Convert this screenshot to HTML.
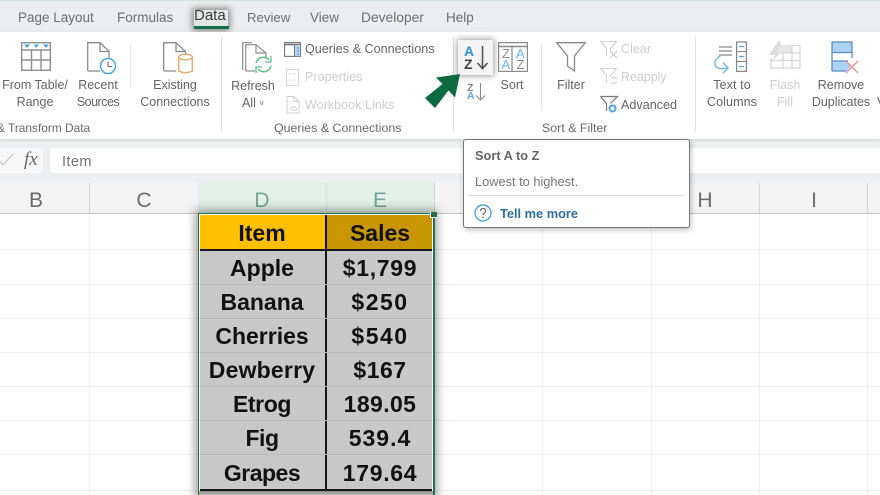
<!DOCTYPE html>
<html><head><meta charset="utf-8">
<style>
html,body{margin:0;padding:0;width:880px;height:495px;overflow:hidden;background:#fff}
body{position:relative;font-family:"Liberation Sans",sans-serif;color:#555}
.a{position:absolute}
.t{position:absolute;white-space:nowrap;font-size:12.5px;line-height:17px;color:#646464;text-align:center;transform:translateX(-50%)}
.l{position:absolute;white-space:nowrap;font-size:12.6px;line-height:17px;color:#646464}
.d{color:#cdcdcd}
.tab{position:absolute;top:9px;font-size:13.5px;line-height:18px;color:#6e6e6e;white-space:nowrap}
.g{position:absolute;white-space:nowrap;font-size:12.3px;line-height:14px;color:#6a6a6a;top:121px}
.h{position:absolute;top:189px;font-size:21px;line-height:23px;color:#6b6b6b;transform:translateX(-50%)}
.c{position:absolute;font-weight:bold;font-size:23px;line-height:28px;color:#111;text-align:center;white-space:nowrap;transform:translateX(-50%)}
svg{position:absolute;overflow:visible}
</style></head><body>
<!-- tab strip -->
<div class="a" style="left:0;top:0;width:880px;height:32px;background:#ebedee"></div>
<div class="a" style="left:0;top:0;width:880px;height:1px;background:#cfe3d8"></div>
<div class="tab" style="left:18px">Page Layout</div>
<div class="tab" style="left:117px">Formulas</div>
<div class="a" style="left:194px;top:10px;width:34px;height:19px;background:#e4e5e5;box-shadow:0 0 6px 2px rgba(0,0,0,.42)"></div>
<div class="tab" style="left:194px;top:7px;color:#3a3a3a;font-size:15px">Data</div>
<div class="a" style="left:194px;top:26px;width:35px;height:3px;background:#107048"></div>
<div class="tab" style="left:247px;font-size:13.2px">Review</div>
<div class="tab" style="left:310px">View</div>
<div class="tab" style="left:361px;font-size:13.8px">Developer</div>
<div class="tab" style="left:446px">Help</div>

<!-- ribbon -->
<div class="a" style="left:0;top:139px;width:880px;height:44px;background:#edeff0"></div>
<div class="a" style="left:0;top:32px;width:880px;height:107px;background:#fff;box-shadow:0 1px 3px rgba(0,0,0,.12)"></div>
<!-- separators -->
<div class="a" style="left:130px;top:44px;width:1px;height:44px;background:#e4e4e4"></div>
<div class="a" style="left:221px;top:37px;width:1px;height:95px;background:#e2e2e2"></div>
<div class="a" style="left:453px;top:37px;width:1px;height:95px;background:#e2e2e2"></div>
<div class="a" style="left:541px;top:44px;width:1px;height:66px;background:#e6e6e6"></div>
<div class="a" style="left:695px;top:37px;width:1px;height:95px;background:#e2e2e2"></div>

<!-- From Table icon -->
<svg style="left:21px;top:42px" width="30" height="29" viewBox="0 0 30 29" fill="none" stroke="#8f8f8f" stroke-width="1.4">
<rect x=".7" y=".7" width="28.600" height="27.600"/><path d="M0 8H30M0 18H30M10.500 8V29M20 8V29"/>
<path d="M3 2.500H9L6 6ZM12.500 2.500H18L15.300 6ZM22 2.500H28L25 6Z" fill="#4ba6e0" stroke="none"/></svg>
<!-- Recent sources -->
<svg style="left:86px;top:41px" width="32" height="34" viewBox="0 0 32 34" fill="none">
<path d="M1.700 30V1.700H14L23 10.500V17" stroke="#8a8a8a" stroke-width="1.300"/><path d="M14 2V10.500H23" stroke="#8a8a8a" stroke-width="1.300"/><path d="M2 30H14" stroke="#8a8a8a" stroke-width="1.300"/>
<circle cx="22" cy="25" r="7.500" fill="#fff" stroke="#4ba6e0" stroke-width="1.500"/><path d="M22 20.500V25.500H26" stroke="#666" stroke-width="1"/></svg>
<!-- Existing -->
<svg style="left:163px;top:41px" width="32" height="34" viewBox="0 0 32 34" fill="none">
<path d="M.7 30V1.700H13L22.500 10.500V13M.7 30H13" stroke="#8a8a8a" stroke-width="1.300"/><path d="M13 2V10.500H22.500" stroke="#8a8a8a" stroke-width="1.300"/>
<path d="M15.700 16V30Q22.500 33.500 29.300 30V16" fill="#fff" stroke="#eba76a" stroke-width="1.400"/><ellipse cx="22.500" cy="16" rx="6.800" ry="2.800" fill="#fff" stroke="#eba76a" stroke-width="1.400"/></svg>
<!-- Refresh -->
<svg style="left:242px;top:41px" width="32" height="34" viewBox="0 0 32 34" fill="none">
<path d="M.7 29V1.700H10" stroke="#8a8a8a" stroke-width="1.200"/>
<path d="M3.700 30V3.700H14L24 12V17M3.700 30H13" fill="#fff" stroke="#8a8a8a" stroke-width="1.200"/><path d="M14 4V12H24" stroke="#8a8a8a" stroke-width="1.200"/>
<path d="M14 22A7.500 7.500 0 0 1 27 19M29 25A7.500 7.500 0 0 1 16 28" stroke="#5dc08a" stroke-width="1.500"/><path d="M29 15V21H23M14 32V26H20" stroke="#5dc08a" stroke-width="1.300"/></svg>

<div class="t" style="left:35px;top:77px;line-height:17px">From Table/<br>Range</div>
<div class="t" style="left:98px;top:77px">Recent<br><span style="letter-spacing:-.5px">Sources</span></div>
<div class="t" style="left:175px;top:77px">Existing<br>Connections</div>
<div class="t" style="left:253px;top:78px">Refresh<br>All <span style="font-size:8px;vertical-align:1px">&#709;</span></div>
<div class="g" style="left:-3px;font-size:11.900px">&amp; Transform Data</div>
<div class="g" style="left:274px;font-size:12.400px">Queries &amp; Connections</div>
<div class="g" style="left:542px;font-size:12.400px">Sort &amp; Filter</div>

<!-- Q&C small icons -->
<svg style="left:284px;top:42px" width="17" height="15" viewBox="0 0 17 15" fill="none"><rect x=".6" y=".6" width="15.800" height="13.800" stroke="#777" stroke-width="1.100"/><path d="M1 2.500H16" stroke="#777" stroke-width="1.600"/><rect x="11" y="4" width="5" height="10" fill="#b4d8f2"/><path d="M10.500 3V14" stroke="#777"/><path d="M13 6H15M13 9H15M13 12H15" stroke="#3e96d6"/></svg>
<div class="l" style="left:305px;top:41px">Queries &amp; Connections</div>
<svg style="left:286px;top:69px" width="14" height="17" viewBox="0 0 14 17" fill="none" stroke="#d6d6d6"><rect x=".5" y=".5" width="12" height="16"/><path d="M3 5H5M7 5H10M3 11H5M7 11H10"/></svg>
<div class="l d" style="left:305px;top:69px">Properties</div>
<svg style="left:286px;top:96px" width="15" height="18" viewBox="0 0 15 18" fill="none" stroke="#d0d0d0"><path d="M1 17V.5H8L13 5.500V17ZM8 1V5.500H13"/><path d="M4 13Q8 9 10 12T6 14"/></svg>
<div class="l d" style="left:305px;top:97px">Workbook Links</div>

<!-- A-Z button -->
<div class="a" style="left:458px;top:40px;width:35px;height:35px;background:#f4f4f4;box-shadow:0 0 6px 1px rgba(0,0,0,.38)"></div>
<div class="a" style="left:464px;top:44px;font-weight:bold;font-size:14px;line-height:14px;color:#2b8fdc">A</div>
<div class="a" style="left:464px;top:57px;font-weight:bold;font-size:14px;line-height:14px;color:#444">Z</div>
<svg style="left:475.500px;top:46px" width="14" height="24" viewBox="0 0 14 24" fill="none" stroke="#555" stroke-width="1.600"><path d="M6.500 0V22M1.500 17L6.500 22.500L11.500 17"/></svg>
<!-- Z-A -->
<div class="a" style="left:467px;top:83px;font-weight:bold;font-size:10.500px;line-height:11px;color:#888">Z</div>
<div class="a" style="left:467px;top:91px;font-weight:bold;font-size:10.500px;line-height:11px;color:#57a9e4">A</div>
<svg style="left:475px;top:83px" width="11" height="19" viewBox="0 0 11 19" fill="none" stroke="#888" stroke-width="1.100"><path d="M5.500 0V17M1 12.500L5.500 17L10 12.500"/></svg>
<!-- green arrow -->
<svg style="left:424px;top:73px" width="37" height="36" viewBox="0 0 37 36"><path d="M36 1L31 24.500L24.500 17.500L11 35L1 25L18.500 11L12 4.500Z" fill="#0e6a41"/></svg>
<!-- Sort -->
<svg style="left:498px;top:42px" width="30" height="30" viewBox="0 0 30 30" fill="none" stroke="#8a8a8a" stroke-width="1.200"><rect x=".6" y=".6" width="28.800" height="28.800"/><path d="M0 4.500H30" stroke-width="1.500"/><path d="M14 4.500V30"/></svg>
<div class="a" style="left:502px;top:47px;font-size:13px;line-height:13px;color:#8b8b8b">Z</div>
<div class="a" style="left:501.500px;top:58px;font-size:13px;line-height:13px;color:#6cb3e6">A</div>
<div class="a" style="left:516px;top:47px;font-size:13px;line-height:13px;color:#6cb3e6">A</div>
<div class="a" style="left:516.500px;top:58px;font-size:13px;line-height:13px;color:#8b8b8b">Z</div>
<div class="t" style="left:512px;top:77px">Sort</div>
<!-- Filter -->
<svg style="left:556px;top:42px" width="30" height="32" viewBox="0 0 30 32" fill="none" stroke="#8a8a8a" stroke-width="1.300"><path d="M.7.700H29.300L18.500 14V29L11.500 24V14Z"/></svg>
<div class="t" style="left:571px;top:77px">Filter</div>
<!-- small filters -->
<svg style="left:600px;top:41px" width="18" height="18" viewBox="0 0 18 18" fill="none" stroke="#d2d2d2" stroke-width="1.100"><path d="M.5.500H16.500L10.500 7.500V10M6.500 15V7.500L.5.500"/><path d="M10 10L17 17M17 10L10 17" stroke="#c6c6c6"/></svg>
<div class="l d" style="left:621px;top:41px">Clear</div>
<svg style="left:600px;top:68px" width="18" height="18" viewBox="0 0 18 18" fill="none" stroke="#d2d2d2" stroke-width="1.100"><path d="M.5.500H16.500L10.500 7.500V9M6.500 15V7.500L.5.500"/><path d="M11 11Q14 8 17 11M17 14Q14 17 11 14"/></svg>
<div class="l d" style="left:621px;top:69px;letter-spacing:-.1px">Reapply</div>
<svg style="left:600px;top:96px" width="18" height="18" viewBox="0 0 18 18" fill="none" stroke="#777" stroke-width="1.200"><path d="M.5.500H17.500L10.500 7.500M6.500 15V7.500L.5.500"/><circle cx="12.500" cy="12.500" r="3" stroke="#4ba6e0" stroke-width="2"/></svg>
<div class="l" style="left:621px;top:97px">Advanced</div>
<!-- Text to columns -->
<svg style="left:714px;top:41px" width="36" height="33" viewBox="0 0 36 33" fill="none">
<path d="M5 6H18M5 10H18M5 14H18" stroke="#888" stroke-width="1.200"/>
<rect x="22.600" y="1" width="9.800" height="29.400" stroke="#888" stroke-width="1.300"/><path d="M23 10.500H32M23 20.500H32" stroke="#888"/><path d="M25 5.500H30M25 15.500H30M25 25.500H30" stroke="#4ba6e0" stroke-width="1.200"/>
<path d="M6 15Q-1 20 1.500 25Q4 29 14 27M9 21.500L14 27L9 32" stroke="#68b3e6" stroke-width="1.300"/></svg>
<div class="t" style="left:732px;top:77px;letter-spacing:.1px">Text to<br>Columns</div>
<!-- Flash fill -->
<svg style="left:768px;top:40px" width="34" height="30" viewBox="0 0 34 30" fill="none"><path d="M9 5H24V13H9Z" fill="#e6e6e6"/><path d="M2 13H32M2 20.500H32M2 28H32M32 5.500V28M24 5.500H32M15 13V28M24 5.500V28M3 18V28" stroke="#d6d6d6" stroke-width="1.200"/><path d="M11 0L1 15H7L4 21L14 12H9L13 4Z" fill="#dcdcdc"/></svg>
<div class="t d" style="left:785px;top:77px">Flash<br>Fill</div>
<!-- Remove dup -->
<svg style="left:831px;top:41px" width="30" height="34" viewBox="0 0 30 34" fill="none">
<path d="M1 11H21V1H1ZM1 20V30H16L20 25L16 20Z" fill="#add3f2"/>
<path d="M1 30V1H21V17M1 11.500H21M1 20H17M1 30H15" stroke="#5a8fbd" stroke-width="1.300"/>
<path d="M15 20L27 32M27 20L15 32" stroke="#f08b8b" stroke-width="1.300"/></svg>
<div class="t" style="left:841px;top:77px">Remove<br>Duplicates</div>
<div class="l" style="left:877px;top:94px">V</div>

<!-- formula bar -->
<div class="a" style="left:-6px;top:148px;width:49px;height:25px;background:#f7f7f7;border-radius:4px"></div>
<svg style="left:0;top:153px" width="14" height="14" viewBox="0 0 14 14" fill="none" stroke="#c4c4c4" stroke-width="1"><path d="M0 8L3 12L13 1"/></svg>
<div class="a" style="left:24px;top:150px;font:italic 19px/20px 'Liberation Serif',serif;color:#666">fx</div>
<div class="a" style="left:50px;top:148px;width:840px;height:25px;background:#fff;border-radius:4px"></div>
<div class="a" style="left:62px;top:153px;font-size:14.500px;line-height:18px;letter-spacing:.4px;color:#737373">Item</div>

<!-- column headers -->
<div class="a" style="left:0;top:182px;width:880px;height:31px;background:#f3f3f3"></div>
<div class="a" style="left:198px;top:182px;width:236px;height:31px;background:#e1f1e8"></div>
<div class="a" style="left:0;top:213px;width:880px;height:1px;background:#c6c6c6"></div>
<div class="a" style="left:89px;top:183px;width:1px;height:31px;background:#d4d4d4"></div>
<div class="a" style="left:326px;top:183px;width:1px;height:31px;background:#d5e2da"></div>
<div class="a" style="left:434px;top:183px;width:1px;height:31px;background:#d4d4d4"></div>
<div class="a" style="left:759px;top:183px;width:1px;height:31px;background:#d4d4d4"></div>
<div class="a" style="left:867px;top:183px;width:1px;height:31px;background:#d4d4d4"></div>
<div class="h" style="left:36px">B</div>
<div class="h" style="left:144px">C</div>
<div class="h" style="left:262px;color:#74a596">D</div>
<div class="h" style="left:380px;color:#74a596">E</div>
<div class="h" style="left:705px">H</div>
<div class="h" style="left:814px">I</div>

<!-- grid -->
<div id="grid">
<div class="a" style="left:0;top:249px;width:880px;height:1px;background:#efefef"></div>
<div class="a" style="left:0;top:284px;width:880px;height:1px;background:#efefef"></div>
<div class="a" style="left:0;top:318px;width:880px;height:1px;background:#efefef"></div>
<div class="a" style="left:0;top:352px;width:880px;height:1px;background:#efefef"></div>
<div class="a" style="left:0;top:386px;width:880px;height:1px;background:#efefef"></div>
<div class="a" style="left:0;top:420px;width:880px;height:1px;background:#efefef"></div>
<div class="a" style="left:0;top:454px;width:880px;height:1px;background:#efefef"></div>
<div class="a" style="left:0;top:490px;width:880px;height:1px;background:#efefef"></div>
<div class="a" style="left:89px;top:214px;width:1px;height:281px;background:#efefef"></div>
<div class="a" style="left:542px;top:214px;width:1px;height:281px;background:#efefef"></div>
<div class="a" style="left:651px;top:214px;width:1px;height:281px;background:#efefef"></div>
<div class="a" style="left:759px;top:214px;width:1px;height:281px;background:#efefef"></div>
<div class="a" style="left:867px;top:214px;width:1px;height:281px;background:#efefef"></div>
</div>

<!-- table -->
<div class="a" style="left:198px;top:213px;width:236px;height:290px;box-shadow:0 0 9px 3px rgba(0,0,0,.38)"></div>
<div class="a" style="left:198px;top:213px;width:236px;height:282px;background:#fff"></div>
<div class="a" style="left:200px;top:215px;width:232px;height:274px;background:#c8c8c8"></div>
<div class="a" style="left:199px;top:491px;width:234px;height:4px;background:linear-gradient(#8f8f8f,#b9b9b9)"></div>
<div class="a" style="left:200px;top:215px;width:125px;height:34px;background:#ffc000"></div>
<div class="a" style="left:326px;top:215px;width:106px;height:34px;background:#c89600"></div>
<div class="a" style="left:200px;top:249px;width:232px;height:2px;background:#161616"></div>
<div class="a" style="left:325px;top:215px;width:2px;height:275px;background:#161616"></div>
<div class="a" style="left:200px;top:284px;width:232px;height:1px;background:#bababa"></div>
<div class="a" style="left:200px;top:318px;width:232px;height:1px;background:#bababa"></div>
<div class="a" style="left:200px;top:352px;width:232px;height:1px;background:#bababa"></div>
<div class="a" style="left:200px;top:386px;width:232px;height:1px;background:#bababa"></div>
<div class="a" style="left:200px;top:420px;width:232px;height:1px;background:#bababa"></div>
<div class="a" style="left:200px;top:454px;width:232px;height:1px;background:#bababa"></div>
<div class="a" style="left:200px;top:489px;width:232px;height:2px;background:#161616"></div>
<div class="a" style="left:197.500px;top:213px;width:1.500px;height:282px;background:#217346"></div>
<div class="a" style="left:433px;top:213px;width:1.500px;height:282px;background:#217346"></div>
<div class="a" style="left:197.500px;top:212.500px;width:237px;height:1.500px;background:#217346"></div>
<div class="a" style="left:430px;top:212px;width:6px;height:5px;background:#217346;border-bottom:1px solid #fff;border-left:1px solid #fff"></div>

<div class="c" style="left:262px;top:219px">Item</div><div class="c" style="left:380px;top:219px">Sales</div>
<div class="c" style="left:262px;top:254px">Apple</div><div class="c" style="left:380px;top:254px;letter-spacing:.7px">$1,799</div>
<div class="c" style="left:262px;top:288px">Banana</div><div class="c" style="left:380px;top:288px;letter-spacing:1.500px">$250</div>
<div class="c" style="left:262px;top:322px">Cherries</div><div class="c" style="left:380px;top:322px;letter-spacing:1.500px">$540</div>
<div class="c" style="left:262px;top:356px;letter-spacing:.2px">Dewberry</div><div class="c" style="left:380px;top:356px;letter-spacing:.5px">$167</div>
<div class="c" style="left:262px;top:390px;letter-spacing:-.4px">Etrog</div><div class="c" style="left:380px;top:390px;letter-spacing:.4px">189.05</div>
<div class="c" style="left:262px;top:424px;letter-spacing:-.5px">Fig</div><div class="c" style="left:380px;top:424px;letter-spacing:1px">539.4</div>
<div class="c" style="left:262px;top:459px;letter-spacing:-.5px">Grapes</div><div class="c" style="left:380px;top:459px;letter-spacing:.7px">179.64</div>

<!-- tooltip -->
<div class="a" style="left:463px;top:139px;width:225px;height:87px;background:#fff;border:1.500px solid #777;border-radius:3px;box-shadow:1px 2px 6px rgba(0,0,0,.25)"></div>
<div class="a" style="left:475px;top:147px;font-size:12.800px;line-height:17px;font-weight:bold;color:#666">Sort A to Z</div>
<div class="a" style="left:475px;top:173px;font-size:12.800px;line-height:17px;color:#757575">Lowest to highest.</div>
<div class="a" style="left:468px;top:195px;width:217px;height:1px;background:#dedede"></div>
<svg style="left:474px;top:204px" width="18" height="18" viewBox="0 0 18 18" fill="none"><circle cx="9" cy="9" r="8" stroke="#4ba6e0" stroke-width="1.400"/><path d="M6.500 7Q6.500 4.500 9 4.500T11.500 7Q11.500 8.500 9 10V11" stroke="#666" stroke-width="1.200"/><circle cx="9" cy="13.300" r=".8" fill="#666"/></svg>
<div class="a" style="left:500px;top:205px;font-size:12.800px;line-height:17px;font-weight:bold;color:#2f6fa8">Tell me more</div>
</body></html>
